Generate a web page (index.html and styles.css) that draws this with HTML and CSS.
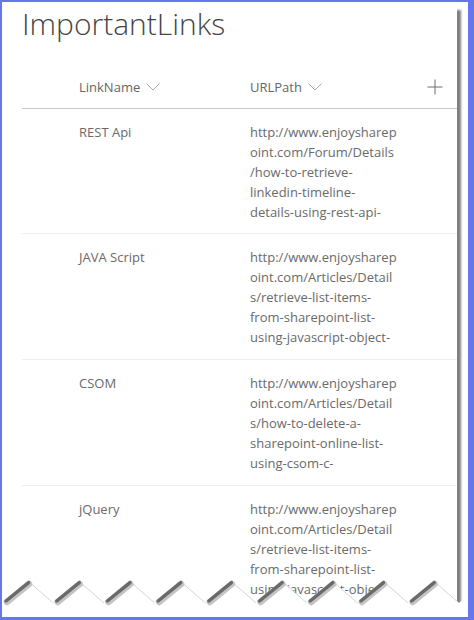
FILE: index.html
```html
<!DOCTYPE html>
<html>
<head>
<meta charset="utf-8">
<link rel="stylesheet" href="styles.css">
</head>
<body>
<div class="frame">
  <div class="paper">
    <h1 class="title">ImportantLinks</h1>
    <div class="list">
      <div class="row head">
        <div class="cell"></div>
        <div class="cell hcell">LinkName <svg class="chev" width="14" height="8" viewBox="0 0 14 8"><polyline points="0.5,0.5 7,7 13.5,0.5" fill="none" stroke="#a8a8a8" stroke-width="1"/></svg></div>
        <div class="cell hcell">URLPath <svg class="chev" width="14" height="8" viewBox="0 0 14 8"><polyline points="0.5,0.5 7,7 13.5,0.5" fill="none" stroke="#a8a8a8" stroke-width="1"/></svg></div>
        <div class="cell add"><svg width="16" height="16" viewBox="0 0 16 16"><path d="M8 0.5V15.5M0.5 8H15.5" stroke="#6e6e6e" stroke-width="1" fill="none"/></svg></div>
      </div>
      <div class="row item first">
        <div class="cell"></div>
        <div class="cell name">REST Api</div>
        <div class="cell url">http://www.enjoysharep<br>oint.com/Forum/Details<br>/how-to-retrieve-<br>linkedin-timeline-<br>details-using-rest-api-</div>
        <div class="cell"></div>
      </div>
      <div class="row item">
        <div class="cell"></div>
        <div class="cell name">JAVA Script</div>
        <div class="cell url">http://www.enjoysharep<br>oint.com/Articles/Detail<br>s/retrieve-list-items-<br>from-sharepoint-list-<br>using-javascript-object-</div>
        <div class="cell"></div>
      </div>
      <div class="row item">
        <div class="cell"></div>
        <div class="cell name">CSOM</div>
        <div class="cell url">http://www.enjoysharep<br>oint.com/Articles/Detail<br>s/how-to-delete-a-<br>sharepoint-online-list-<br>using-csom-c-</div>
        <div class="cell"></div>
      </div>
      <div class="row item">
        <div class="cell"></div>
        <div class="cell name">jQuery</div>
        <div class="cell url">http://www.enjoysharep<br>oint.com/Articles/Detail<br>s/retrieve-list-items-<br>from-sharepoint-list-<br>using-javascript-object-</div>
        <div class="cell"></div>
      </div>
    </div>
  </div>
  <svg class="torn" width="466" height="47" viewBox="0 0 466 47">
    <polygon fill="#ffffff" points="0,47 0,33 26,11 51.3,33 76.7,11 102,33 127.4,11 152.7,33 178.1,11 203.4,33 228.8,11 254.1,33 279.5,11 304.8,33 330.2,11 355.5,33 380.9,11 406.2,33 431.6,11 456.9,33 466,25 466,47"/>
    <g stroke="#d6d6d6" stroke-width="1" fill="none">
      <line x1="26" y1="11" x2="51.3" y2="33"/>
      <line x1="76.7" y1="11" x2="102" y2="33"/>
      <line x1="127.4" y1="11" x2="152.7" y2="33"/>
      <line x1="178.1" y1="11" x2="203.4" y2="33"/>
      <line x1="228.8" y1="11" x2="254.1" y2="33"/>
      <line x1="279.5" y1="11" x2="304.8" y2="33"/>
      <line x1="330.2" y1="11" x2="355.5" y2="33"/>
      <line x1="380.9" y1="11" x2="406.2" y2="33"/>
      <line x1="431.6" y1="11" x2="456.9" y2="33"/>
    </g>
    <g stroke="#c4c4c4" stroke-width="6.5" stroke-linecap="round" fill="none">
      <line x1="5" y1="32" x2="27" y2="14"/>
      <line x1="55.7" y1="32" x2="77.7" y2="14"/>
      <line x1="106.4" y1="32" x2="128.4" y2="14"/>
      <line x1="157.1" y1="32" x2="179.1" y2="14"/>
      <line x1="207.8" y1="32" x2="229.8" y2="14"/>
      <line x1="258.5" y1="32" x2="280.5" y2="14"/>
      <line x1="309.2" y1="32" x2="331.2" y2="14"/>
      <line x1="359.9" y1="32" x2="381.9" y2="14"/>
      <line x1="410.6" y1="32" x2="432.6" y2="14"/>
    </g>
    <g stroke="#6a6a6a" stroke-width="3.4" stroke-linecap="round" fill="none">
      <line x1="4" y1="31" x2="26.6" y2="12.6"/>
      <line x1="54.7" y1="31" x2="77.3" y2="12.6"/>
      <line x1="105.4" y1="31" x2="128" y2="12.6"/>
      <line x1="156.1" y1="31" x2="178.7" y2="12.6"/>
      <line x1="206.8" y1="31" x2="229.4" y2="12.6"/>
      <line x1="257.5" y1="31" x2="280.1" y2="12.6"/>
      <line x1="308.2" y1="31" x2="330.8" y2="12.6"/>
      <line x1="358.9" y1="31" x2="381.5" y2="12.6"/>
      <line x1="409.6" y1="31" x2="432.2" y2="12.6"/>
    </g>
  </svg>
</div>
</body>
</html>
```
FILE: styles.css
```css
html, body {
  margin: 0;
  height: 100%;
}
body {
  background: #6677ee;
  font-family: "Open Sans", "Noto Sans", "Liberation Sans", sans-serif;
  overflow: hidden;
}
.frame {
  position: relative;
  margin: 2px 6px 0 2px;
  height: 615px;
  background: #ffffff;
  overflow: hidden;
}
.paper {
  width: 455px;
  height: 100%;
  box-sizing: border-box;
  padding: 2px 0 0 20px;
  background: #ffffff;
  box-shadow: 4px 8px 2px rgba(0, 0, 0, 0.5);
  overflow: hidden;
}
.title {
  margin: 0;
  font-size: 30px;
  font-weight: 300;
  line-height: 40px;
  color: #454545;
}
.list {
  margin-top: 22px;
}
.row {
  display: grid;
  grid-template-columns: 57px 171px 152px 1fr;
}
.head {
  height: 42px;
  align-items: center;
  border-bottom: 1px solid #c8c8c8;
  font-size: 13px;
  color: #666666;
}
.hcell {
  display: flex;
  align-items: center;
  gap: 6px;
}
.chev {
  display: block;
}
.add {
  display: flex;
  justify-content: flex-end;
  padding-right: 14px;
}
.add svg {
  display: block;
}
.item {
  padding: 13px 0 12px;
  border-bottom: 1px solid #efefef;
  font-size: 13px;
  line-height: 20px;
  color: #6a6a6a;
}
.item.first {
  padding-bottom: 11px;
}
.url {
  white-space: nowrap;
}
.torn {
  position: absolute;
  left: 0;
  bottom: 0;
  display: block;
}
```
